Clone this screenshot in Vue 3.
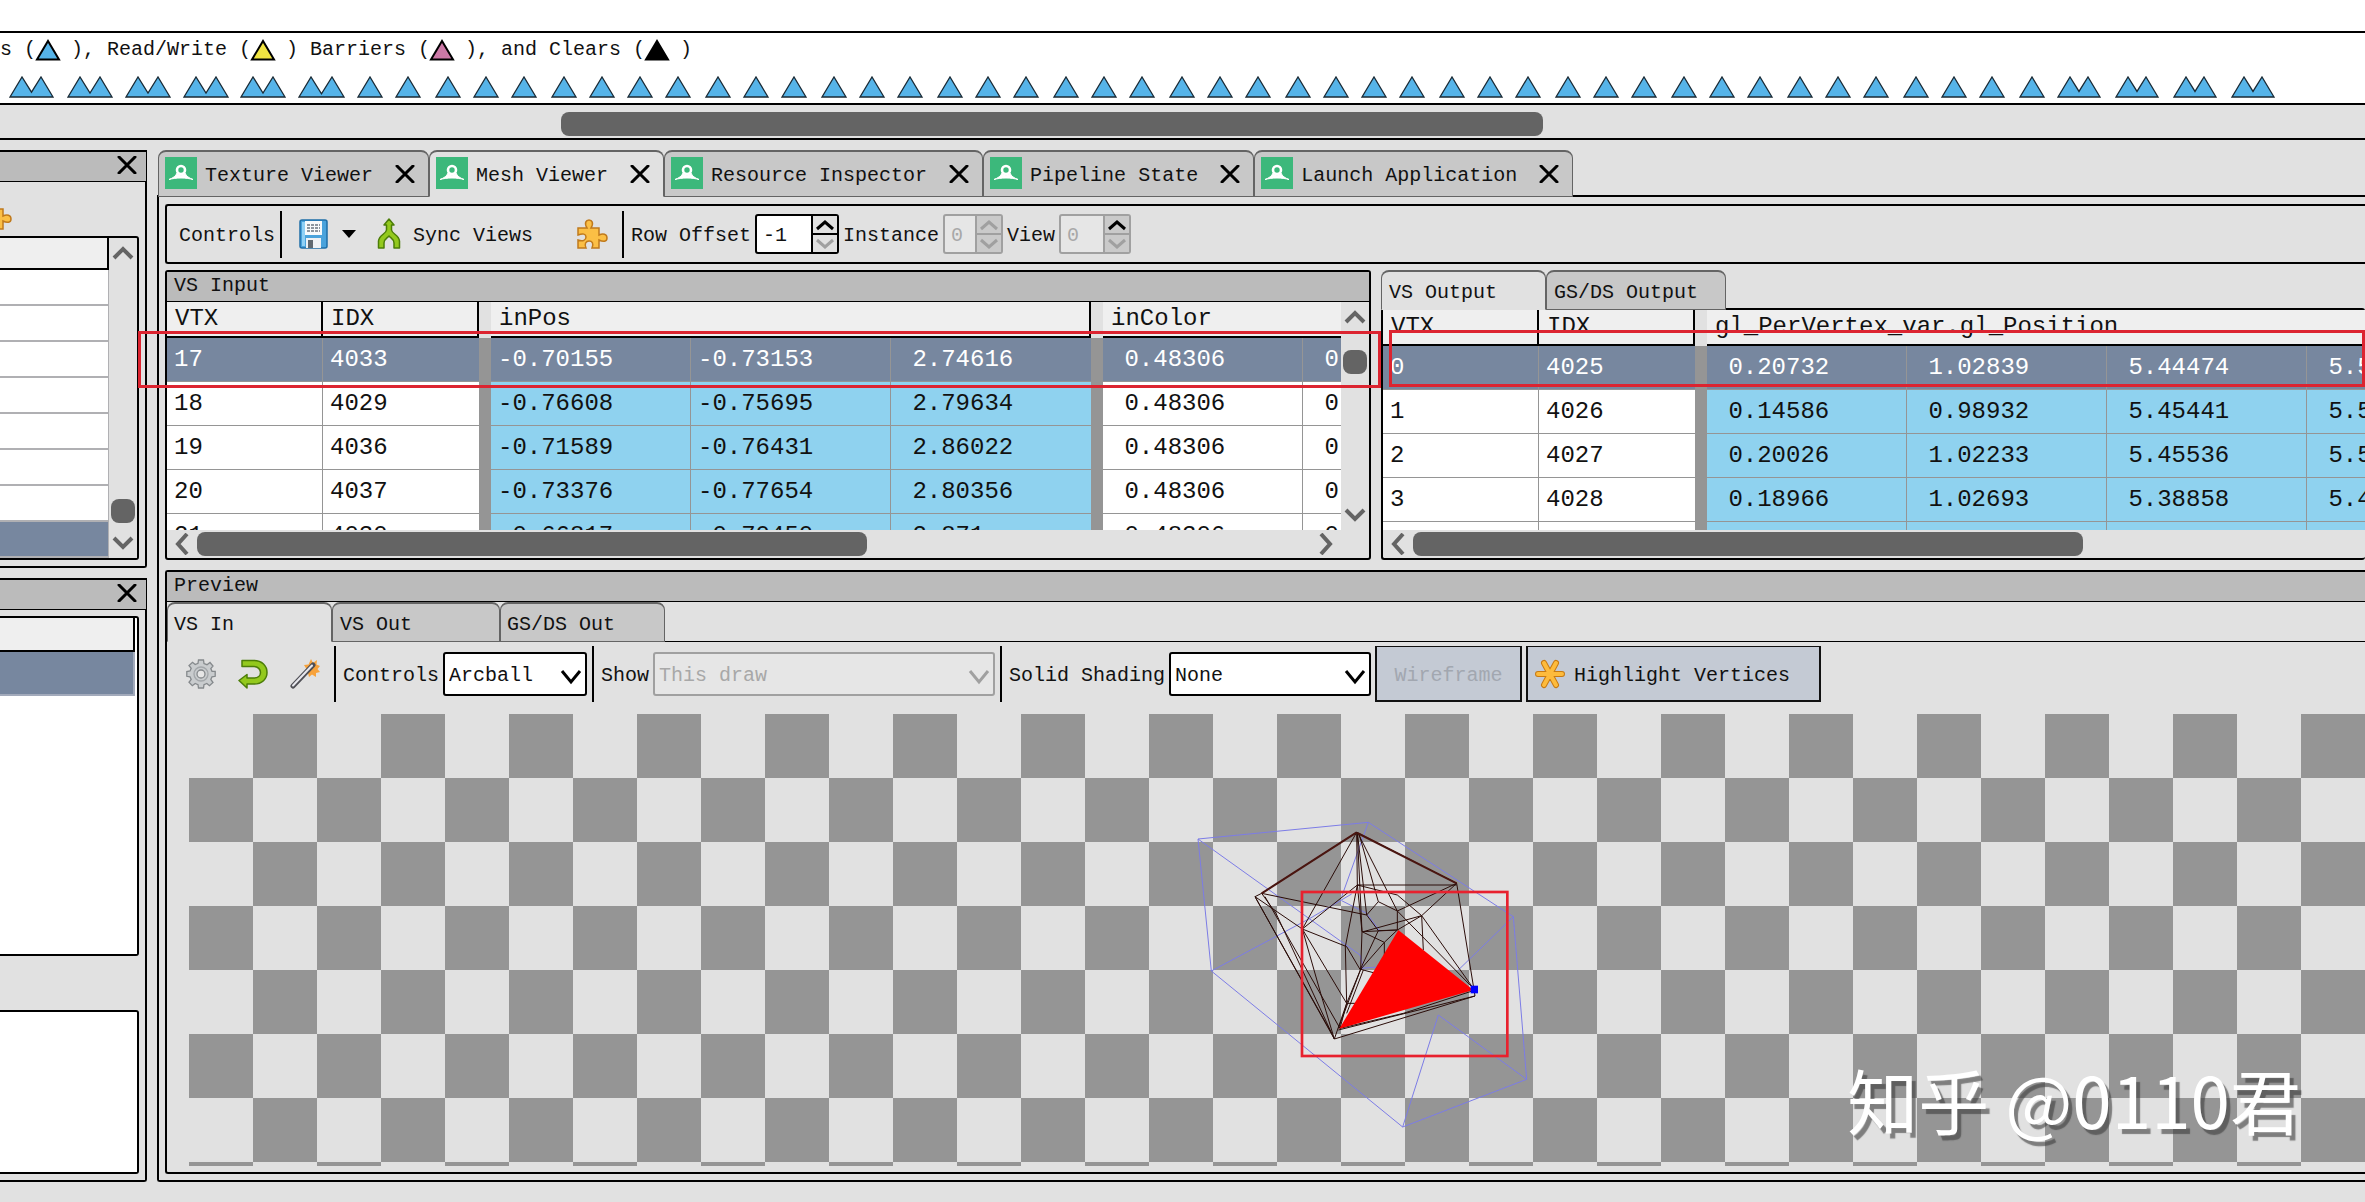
<script setup>
import { ref } from 'vue'

const legend = [
  { before: 's (', color: '#56b4e9' },
  { before: '), Read/Write (', color: '#f0e442' },
  { before: ') Barriers (', color: '#cc79a7' },
  { before: '), and Clears (', color: '#000000' },
]

const pairs = [
  [22, 41], [80, 100], [138, 158], [196, 216], [253, 273], [311, 332],
  [2070, 2088], [2128, 2146], [2186, 2204], [2244, 2262],
]
const singles = [
  370, 408, 448, 486, 524, 564, 602, 640, 678, 718, 756, 794, 834, 872, 910, 950, 988, 1026, 1066, 1104,
  1142, 1182, 1220, 1258, 1298, 1336, 1374, 1412, 1452, 1490, 1528, 1568, 1606, 1644, 1684, 1722, 1760,
  1800, 1838, 1876, 1916, 1954, 1992, 2032,
]
const pairPath = ([a, b]) => {
  const mid = (a + b) / 2
  const valley = 1 + ((b - a) / 2) * 1.6
  return `M${a - 12} 21L${a} 1L${mid} ${valley}L${b} 1L${b + 12} 21Z`
}
const singlePath = (x) => `M${x - 12} 21L${x} 1L${x + 12} 21Z`

const tabs = ['Texture Viewer', 'Mesh Viewer', 'Resource Inspector', 'Pipeline State', 'Launch Application']
const activeTab = ref('Mesh Viewer')

const inputRows = [
  ['17', '4033', '-0.70155', '-0.73153', ' 2.74616', ' 0.48306', ' 0'],
  ['18', '4029', '-0.76608', '-0.75695', ' 2.79634', ' 0.48306', ' 0'],
  ['19', '4036', '-0.71589', '-0.76431', ' 2.86022', ' 0.48306', ' 0'],
  ['20', '4037', '-0.73376', '-0.77654', ' 2.80356', ' 0.48306', ' 0'],
  ['21', '4030', '-0.66817', '-0.70450', ' 2.871', ' 0.48306', ' 0'],
]
const outputRows = [
  ['0', '4025', ' 0.20732', ' 1.02839', ' 5.44474', ' 5.5'],
  ['1', '4026', ' 0.14586', ' 0.98932', ' 5.45441', ' 5.5'],
  ['2', '4027', ' 0.20026', ' 1.02233', ' 5.45536', ' 5.5'],
  ['3', '4028', ' 0.18966', ' 1.02693', ' 5.38858', ' 5.4'],
  ['', '', '', '', '', ''],
]
const rowOffset = ref('-1')
const controls = ref('Arcball')
const shading = ref('None')
</script>

<template>
  <div class="app">
    <header class="timeline">
      <div class="legend">
        <template v-for="item in legend" :key="item.before">
          <span>{{ item.before }}</span>
          <svg class="mark" width="26" height="22" viewBox="0 0 26 22">
            <path d="M2 20.500L13 2L24 20.500Z" :fill="item.color" stroke="#000" stroke-width="2" />
          </svg>
        </template>
        <span>)</span>
      </div>
      <svg class="events" width="2365" height="23">
        <g fill="#56b4e9" stroke="#1a2a35" stroke-width="1.300">
          <path v-for="p in pairs" :key="p[0]" :d="pairPath(p)" />
          <path v-for="x in singles" :key="x" :d="singlePath(x)" />
        </g>
      </svg>
    </header>
    <div class="time-scroll">
      <div class="space-a"></div>
      <div class="thumb"></div>
      <div class="space-b"></div>
    </div>

    <main class="workspace">
      <aside class="docks">
        <section class="dock dock-top">
          <div class="dock-title">
            <button class="close" aria-label="Close"><svg width="20" height="18" viewBox="0 0 20 18"><path d="M2 1L18 17M18 1L2 17" /></svg></button>
          </div>
          <div class="dock-tools">
            <svg width="31" height="31" viewBox="0 0 31 31"><path class="puzzle" d="M1 9H10C7 4 9 1 12 1S17 4 14 9H22V16C26 14 30 15 30 19S26 23 22 21V29H15C17 24 15 22 12 22S7 25 9 29H1V21C6 23 9 21 9 18S6 14 1 16Z" /></svg>
          </div>
          <div class="list-box">
            <div class="list">
              <div class="list-head"></div>
              <div v-for="n in 7" :key="n" class="list-row"></div>
              <div class="list-row selected"></div>
            </div>
            <div class="vbar list-bar">
              <button aria-label="Up"><svg width="22" height="14" viewBox="0 0 22 14"><path d="M2 12L11 3L20 12" /></svg></button>
              <div class="fill"></div>
              <div class="knob"></div>
              <button aria-label="Down"><svg width="22" height="14" viewBox="0 0 22 14"><path d="M2 2L11 11L20 2" /></svg></button>
            </div>
          </div>
        </section>
        <section class="dock dock-bottom">
          <div class="dock-title">
            <button class="close" aria-label="Close"><svg width="20" height="18" viewBox="0 0 20 18"><path d="M2 1L18 17M18 1L2 17" /></svg></button>
          </div>
          <div class="box box-main">
            <div class="box-head"></div>
            <div class="box-row"></div>
          </div>
          <div class="box box-small"></div>
        </section>
      </aside>

      <section class="main">
        <div class="tabs main-tabs" role="tablist">
          <div v-for="t in tabs" :key="t" class="tab" :class="{ active: t === activeTab }">
            <svg width="32" height="32" viewBox="0 0 32 32">
              <rect width="32" height="32" fill="#3cb87b" />
              <circle cx="16" cy="13" r="4" fill="none" stroke="#fff" stroke-width="2.600" />
              <path d="M12 16C11 19 8 21 4 22.500C11 20.500 21 20.500 28 22.500C24 21 21 19 20 16C18 19 14 19 12 16Z" fill="#fff" stroke="#fff" stroke-width="1" />
            </svg>
            <button class="tab-label" role="tab" :aria-selected="t === activeTab" @click="activeTab = t">{{ t }}</button>
            <button class="close" :aria-label="'Close ' + t"><svg width="20" height="18" viewBox="0 0 20 18"><path d="M2 1L18 17M18 1L2 17" /></svg></button>
          </div>
        </div>

        <div class="pane">
          <div class="toolbar">
            <span>Controls</span>
            <i class="sep"></i>
            <button class="icon save" aria-label="Save">
              <svg width="29" height="31" viewBox="0 0 29 31">
                <rect x="1" y="1" width="27" height="28" rx="2" fill="#4aa3dc" stroke="#1f6fa8" stroke-width="1.500" />
                <rect x="3" y="3" width="3" height="24" fill="#8fd0f5" />
                <rect x="6" y="2" width="17" height="14" fill="#f7fafc" />
                <path d="M8 6H21M8 9H21M8 12H21" stroke="#6b7580" stroke-width="1.400" stroke-dasharray="3 1" />
                <rect x="7" y="19" width="15" height="10" fill="#eef1f4" />
                <rect x="9" y="21" width="5" height="8" fill="#5f6870" />
              </svg>
              <svg width="14" height="8" viewBox="0 0 14 8"><path d="M0 0H14L7 8Z" fill="#000" /></svg>
            </button>
            <button class="icon sync">
              <svg width="24" height="32" viewBox="0 0 24 32">
                <path d="M12 1L17 7H14.500V12C15 16 22 17 22.500 23V30H17V25C17 21 13.500 20 12 18C10.500 20 7 21 7 25V30H1.500V23C2 17 9 16 9.500 12V7H7Z" fill="#93c91d" stroke="#4c7d08" stroke-width="1.500" stroke-linejoin="round" />
              </svg>
              <span>Sync Views</span>
            </button>
            <button class="icon plugin" aria-label="Extensions">
              <svg width="31" height="31" viewBox="0 0 31 31"><path class="puzzle" d="M1 9H10C7 4 9 1 12 1S17 4 14 9H22V16C26 14 30 15 30 19S26 23 22 21V29H15C17 24 15 22 12 22S7 25 9 29H1V21C6 23 9 21 9 18S6 14 1 16Z" /></svg>
            </button>
            <i class="sep"></i>
            <label for="row-offset">Row Offset</label>
            <div class="spin wide">
              <input id="row-offset" v-model="rowOffset" />
              <div class="steps">
                <button aria-label="Increase row offset"><svg width="20" height="12" viewBox="0 0 20 12"><path class="on" d="M2 10L10 3L18 10" /></svg></button>
                <button aria-label="Decrease row offset" disabled><svg width="20" height="12" viewBox="0 0 20 12"><path d="M2 2L10 9L18 2" /></svg></button>
              </div>
            </div>
            <label for="instance">Instance</label>
            <div class="spin off">
              <input id="instance" value="0" disabled />
              <div class="steps">
                <button aria-label="Increase instance" disabled><svg width="20" height="12" viewBox="0 0 20 12"><path d="M2 10L10 3L18 10" /></svg></button>
                <button aria-label="Decrease instance" disabled><svg width="20" height="12" viewBox="0 0 20 12"><path d="M2 2L10 9L18 2" /></svg></button>
              </div>
            </div>
            <label for="view">View</label>
            <div class="spin off view">
              <input id="view" value="0" disabled />
              <div class="steps">
                <button aria-label="Increase view" disabled><svg width="20" height="12" viewBox="0 0 20 12"><path class="on" d="M2 10L10 3L18 10" /></svg></button>
                <button aria-label="Decrease view" disabled><svg width="20" height="12" viewBox="0 0 20 12"><path d="M2 2L10 9L18 2" /></svg></button>
              </div>
            </div>
          </div>

          <div class="split">
            <section class="panel vs-input">
              <h2 class="panel-title">VS Input</h2>
              <div class="grid-area">
                <div class="table-clip">
                  <table class="data in">
                    <colgroup>
                      <col class="c-id" /><col class="c-id" /><col class="c-gap" /><col class="c-num" /><col class="c-num" />
                      <col class="c-num" /><col class="c-gap" /><col class="c-num" /><col class="c-last" />
                    </colgroup>
                    <thead>
                      <tr><th>VTX</th><th>IDX</th><td class="gap"></td><th colspan="3">inPos</th><td class="gap"></td><th colspan="2" class="open">inColor</th></tr>
                    </thead>
                    <tbody>
                      <tr v-for="(r, i) in inputRows" :key="r[0]" :class="{ selected: i === 0 }">
                        <td>{{ r[0] }}</td><td class="edge">{{ r[1] }}</td><td class="gap"></td>
                        <td class="pos">{{ r[2] }}</td><td class="pos">{{ r[3] }}</td><td class="pos edge">{{ r[4] }}</td><td class="gap"></td>
                        <td>{{ r[5] }}</td><td class="last">{{ r[6] }}</td>
                      </tr>
                    </tbody>
                  </table>
                </div>
                <div class="vbar">
                  <button aria-label="Up"><svg width="22" height="14" viewBox="0 0 22 14"><path d="M2 12L11 3L20 12" /></svg></button>
                  <div class="knob"></div>
                  <div class="fill"></div>
                  <button aria-label="Down"><svg width="22" height="14" viewBox="0 0 22 14"><path d="M2 2L11 11L20 2" /></svg></button>
                </div>
              </div>
              <div class="hbar">
                <button aria-label="Left"><svg width="14" height="22" viewBox="0 0 14 22"><path d="M12 1L3 11L12 21" /></svg></button>
                <div class="thumb"></div>
                <div class="fill"></div>
                <button aria-label="Right"><svg width="14" height="22" viewBox="0 0 14 22"><path d="M2 1L11 11L2 21" /></svg></button>
              </div>
              <div class="mark-box mark-in"></div>
            </section>

            <section class="vs-output">
              <div class="tabs out-tabs" role="tablist">
                <button class="tab active" role="tab">VS Output</button>
                <button class="tab" role="tab">GS/DS Output</button>
              </div>
              <div class="panel out-panel">
                <div class="table-clip">
                  <table class="data out">
                    <colgroup>
                      <col class="c-id" /><col class="c-id" /><col class="c-gap" /><col class="c-num" /><col class="c-num" />
                      <col class="c-num" /><col class="c-num" />
                    </colgroup>
                    <thead>
                      <tr><th>VTX</th><th>IDX</th><td class="gap"></td><th colspan="4">gl_PerVertex_var.gl_Position</th></tr>
                    </thead>
                    <tbody>
                      <tr v-for="(r, i) in outputRows" :key="r[0]" :class="{ selected: i === 0 }">
                        <td>{{ r[0] }}</td><td class="edge">{{ r[1] }}</td><td class="gap"></td>
                        <td v-for="n in 4" :key="n" class="pos">{{ r[n + 1] }}</td>
                      </tr>
                    </tbody>
                  </table>
                </div>
                <div class="hbar">
                  <button aria-label="Left"><svg width="14" height="22" viewBox="0 0 14 22"><path d="M12 1L3 11L12 21" /></svg></button>
                  <div class="thumb"></div>
                </div>
              </div>
              <div class="mark-box mark-out"></div>
            </section>
          </div>

          <section class="preview">
            <h2 class="panel-title">Preview</h2>
            <div class="tabs view-tabs" role="tablist">
              <button class="tab" :class="'active'" role="tab">VS In</button>
              <button class="tab" role="tab">VS Out</button>
              <button class="tab" role="tab">GS/DS Out</button>
            </div>
            <div class="view-tools">
              <button class="icon" aria-label="Options">
                <svg width="30" height="30" viewBox="0 0 30 30">
                  <path d="M12.500 1H17.500L18 4.500L21 5.700L24 3.500L27 7L24.800 9.500L26 12.300H29.200V17.300L26 17.800L24.800 20.500L27 23.500L23.500 26.700L20.800 24.500L18 25.700L17.500 29H12.500L12 25.700L9.200 24.500L6.300 26.700L3 23.300L5.200 20.500L4 17.800L0.800 17.300V12.500L4 12L5.200 9.300L3 6.500L6.500 3.300L9.200 5.500L12 4.300Z" fill="#c9ccce" stroke="#85898c" stroke-width="1.300" />
                  <circle cx="15" cy="15" r="7" fill="none" stroke="#a3a7aa" stroke-width="1.300" />
                  <circle cx="15" cy="15" r="4" fill="#e6e6e6" stroke="#85898c" stroke-width="1.300" />
                </svg>
              </button>
              <button class="icon" aria-label="Reset view">
                <svg width="30" height="30" viewBox="0 0 30 30">
                  <path d="M4 1.500H16C24 1.500 29 7 29 13.500S24 25 16 25H9V29L1 21.500L9 15.500V19H16C20 19 22.500 16.500 22.500 13.500S20 7.500 16 7.500H4Z" fill="#93c91d" stroke="#4c7d08" stroke-width="1.500" stroke-linejoin="round" />
                </svg>
              </button>
              <button class="icon" aria-label="Auto fit">
                <svg width="30" height="30" viewBox="0 0 30 30">
                  <path d="M21 0L23 4L27 1L26.500 5.500L30 7L27.500 10L30 13L26 14L26 18L22 15.500L19 18L18 14L14 13.500L16.500 10L14 6L18.500 5.500Z" fill="#f7a23b" />
                  <path d="M3 27L23 6" stroke="#4f4f55" stroke-width="5" stroke-linecap="round" />
                  <path d="M3 26.500L22 6.500" stroke="#e8e8ee" stroke-width="2" stroke-linecap="round" />
                </svg>
              </button>
              <i class="sep"></i>
              <label for="controls">Controls</label>
              <div class="select s-controls">
                <select id="controls" v-model="controls"><option>Arcball</option><option>Flycam</option></select>
                <svg width="22" height="18" viewBox="0 0 22 18"><path d="M2 3L11 14L20 3" /></svg>
              </div>
              <i class="sep"></i>
              <label for="show">Show</label>
              <div class="select s-show off">
                <select id="show" disabled><option>This draw</option></select>
                <svg width="22" height="18" viewBox="0 0 22 18"><path d="M2 3L11 14L20 3" /></svg>
              </div>
              <i class="sep"></i>
              <label for="shading">Solid Shading</label>
              <div class="select s-shading">
                <select id="shading" v-model="shading"><option>None</option><option>Solid Colour</option></select>
                <svg width="22" height="18" viewBox="0 0 22 18"><path d="M2 3L11 14L20 3" /></svg>
              </div>
              <button class="toggle wire" disabled><span>Wireframe</span></button>
              <button class="toggle high">
                <svg width="30" height="30" viewBox="0 0 30 30" stroke-linecap="round">
                  <path d="M15 15L9 4M15 15L21 4M15 15H3M15 15H27M15 15L9 26M15 15L21 26" stroke="#c77a12" stroke-width="6" />
                  <path d="M15 15L9 4M15 15L21 4M15 15H3M15 15H27M15 15L9 26M15 15L21 26" stroke="#fdbb3c" stroke-width="4" />
                </svg>
                <span>Highlight Vertices</span>
              </button>
            </div>
            <div class="canvas">
              <svg class="mesh" width="420" height="380" viewBox="0 0 1260 1140" fill="none">
                <g stroke="#7c7ce6" stroke-width="3">
                  <path d="M144 177L655 127L1090 410L1130 898L758 1041L184 573Z" />
                  <path d="M144 177L630 525L640 562M184 573L480 415L605 342M655 127L575 350M1090 410L925 570M865 705L758 1041M865 705L1130 898M575 362L650 400L690 455M630 565L700 560" />
                </g>
                <g stroke="#2a0c08" stroke-width="3">
                  <path d="M620 157L335 340L315 350L553 777L975 648L920 310Z" />
                  <path d="M620 157L457 447L622 315H920M620 157L622 315M622 157L650 405M624 160L742 393M628 165L685 365M622 160L636 455M335 340L650 405M315 350L457 447L590 500L630 568M457 447L512 640L553 777M457 447L590 670M335 340L378 400L553 777M345 350L570 745M315 350L545 760M622 315L586 500L590 670L553 777M622 315L636 455L632 568M622 315L742 345L815 407L742 450L636 455M650 405L685 452L742 450M650 405L685 365L742 393V450M742 393L920 310L815 407L640 455M815 407L820 510M815 407L970 625M742 393L970 625M636 455L703 487L742 450M703 487L632 568L670 578M685 452L630 570M703 487V530M632 568L590 670H620M632 568L565 745M590 670L570 745L760 700L970 632M565 750L975 648M640 570L590 700" />
                </g>
                <path d="M620 157L335 340M622 159L920 310" stroke="#4a1510" stroke-width="6" />
                <path d="M745 450L970 630L568 746Z" fill="#f00" />
                <rect x="962" y="617" width="22" height="23" fill="#00f" />
                <rect x="456" y="336" width="616" height="492" stroke="#e8212e" stroke-width="8" />
              </svg>
              <div class="watermark">知乎 @0110君</div>
            </div>
          </section>
        </div>
      </section>
    </main>
  </div>
</template>

<style>
body {
  margin: 0;
  background: #e1e1e1;
}
</style>

<style scoped>
.app {
  display: flex;
  flex-direction: column;
  min-height: 100vh;
  overflow: hidden;
  background: #e1e1e1;
  color: #111;
  font: 20px/24px "Liberation Mono", "Noto Sans CJK SC", monospace;
}
.app *,
.app *::before {
  box-sizing: border-box;
}
button,
input,
select {
  margin: 0;
  padding: 0;
  border: 0;
  background: none;
  color: inherit;
  font: inherit;
}
svg {
  display: block;
  flex: none;
}

/* timeline */
.timeline {
  height: 74px;
  margin-top: 31px;
  padding-top: 5px;
  border-top: 2px solid #000;
  border-bottom: 2px solid #000;
  background: #fff;
  box-shadow: 0 -31px 0 #fff;
}
.legend {
  display: flex;
  align-items: center;
  height: 24px;
  white-space: pre;
}
.mark {
  margin: 0 10px 0 -1px;
}
.events {
  margin-top: 14px;
}
.time-scroll {
  display: flex;
  height: 35px;
  padding: 7px 0 3px;
  border-bottom: 2px solid #000;
}
.time-scroll .space-a {
  flex: 561;
}
.time-scroll .thumb {
  flex: 982;
}
.time-scroll .space-b {
  flex: 822;
}
.thumb {
  height: 24px;
  border-radius: 8px;
  background: #646464;
}

/* workspace */
.workspace {
  flex: 1;
  display: flex;
  gap: 10px;
  padding: 10px 0 20px;
}
.docks {
  flex: none;
  display: flex;
  flex-direction: column;
  gap: 10px;
  width: 147px;
}
.dock {
  display: flex;
  flex-direction: column;
  border: solid #000;
  border-width: 0 2px 2px 0;
  border-radius: 0 0 3px 0;
  padding: 0 6px 6px 0;
}
.dock-top {
  height: 418px;
}
.dock-bottom {
  flex: 1;
}
.dock-title {
  display: flex;
  justify-content: flex-end;
  align-items: center;
  height: 32px;
  margin-right: -8px;
  padding: 0 9px 4px 0;
  border: solid #000;
  border-width: 2px 1px 1px 0;
  background: #bbb;
}
.close path {
  stroke: #000;
  stroke-width: 3;
  stroke-linecap: round;
  fill: none;
}
.dock-tools {
  display: flex;
  align-items: center;
  height: 54px;
  margin-right: 127px;
  padding-top: 12px;
  justify-content: flex-end;
}
.puzzle {
  fill: #fbbf45;
  stroke: #c07a1c;
  stroke-width: 1.500;
}
.list-box {
  flex: 1;
  display: flex;
  border: 2px solid #000;
  border-left: 0;
  border-radius: 0 3px 3px 0;
}
.list {
  flex: 1;
  background: #fff;
}
.list-head {
  height: 32px;
  border: solid #000;
  border-width: 0 2px 2px 0;
  background: #efefef;
}
.list-row {
  height: 36px;
  border: solid #b0b0b3;
  border-width: 0 1px 2px 0;
}
.list-row.selected {
  background: #77879f;
}
.vbar {
  flex: none;
  display: flex;
  flex-direction: column;
  align-items: center;
  width: 28px;
  padding: 8px 0;
}
.fill {
  flex: 1;
}
.knob {
  width: 24px;
  height: 24px;
  border-radius: 8px;
  background: #646464;
}
.vbar path,
.hbar path {
  fill: none;
  stroke: #646464;
  stroke-width: 4;
}
.box {
  border: 2px solid #000;
  border-left: 0;
  border-radius: 0 3px 3px 0;
  background: #fff;
}
.box-main {
  flex: 1;
  margin: 6px 0 54px;
  padding-right: 2px;
}
.box-head {
  height: 34px;
  border: solid #000;
  border-width: 0 2px 2px 0;
  background: #efefef;
}
.box-row {
  height: 44px;
  border: solid #a2aabb;
  border-width: 0 2px 2px 0;
  background: #77879f;
}
.box-small {
  height: 164px;
}

/* tabs */
.tabs {
  display: flex;
  position: relative;
  z-index: 1;
}
.tab {
  display: flex;
  align-items: center;
  border: 1px solid #646464;
  border-top-width: 2px;
  border-radius: 8px 8px 0 0;
  background: #c8c8c8;
}
.tab.active {
  border-bottom-color: #e1e1e1;
  background: #e1e1e1;
}
.main {
  flex: 1;
  min-width: 0;
  display: flex;
  flex-direction: column;
}
.main-tabs {
  margin-bottom: -2px;
  height: 47px;
  padding-left: 1px;
}
.main-tabs .tab {
  padding: 0 13px 4px 6px;
}
.main-tabs .tab > svg {
  margin-top: 2px;
}
.tab-label {
  margin: 8px 22px 0 8px;
}
.main-tabs .close {
  margin-top: 4px;
}
.pane {
  flex: 1;
  display: flex;
  flex-direction: column;
  border: solid #000;
  border-width: 2px 0 2px 2px;
  border-radius: 0 0 0 3px;
  padding: 7px 0 6px 6px;
}

/* upper toolbar */
.toolbar {
  display: flex;
  align-items: center;
  height: 60px;
  padding-left: 12px;
  border: 2px solid #000;
  border-right: 0;
  border-radius: 3px 0 0 3px;
}
.toolbar span,
.toolbar label,
.toolbar input,
.view-tools span,
.view-tools label,
.view-tools select {
  padding-top: 4px;
}
.sep {
  flex: none;
  width: 2px;
  height: 47px;
  margin: 0 7px 0 5px;
  background: #000;
}
.icon {
  display: flex;
  align-items: center;
  flex: none;
}
.save {
  gap: 14px;
  margin-left: 10px;
}
.sync {
  gap: 12px;
  margin-left: 21px;
}
.plugin {
  margin: 0 9px 0 44px;
}
.spin {
  display: flex;
  flex: none;
  width: 60px;
  height: 40px;
  margin: 0 4px;
  border: 2px solid #000;
  border-radius: 3px;
  background: #fff;
}
.spin.wide {
  width: 84px;
}
.spin.view {
  width: 72px;
}
.spin input {
  flex: 1;
  width: 0;
  min-width: 0;
  padding-left: 6px;
}
.spin.off {
  border-color: #a0a0a0;
  background: #e6e6e6;
  color: #a8a8a8;
}
.steps {
  display: flex;
  flex-direction: column;
  width: 26px;
  border-left: 2px solid #000;
  background: #e1e1e1;
}
.off .steps {
  border-color: #a0a0a0;
  background: #cacaca;
}
.steps button {
  flex: 1;
  display: flex;
  align-items: center;
  justify-content: center;
}
.steps button + button {
  border-top: 2px solid #000;
}
.off .steps button + button {
  border-color: #a0a0a0;
}
.steps path {
  fill: none;
  stroke: #a0a0a0;
  stroke-width: 3;
}
.steps path.on {
  stroke: #000;
}

/* tables */
.split {
  display: flex;
  gap: 10px;
  height: 290px;
  margin: 6px 0 10px;
}
.panel {
  display: flex;
  flex-direction: column;
  border: 2px solid #000;
  border-radius: 3px;
}
.vs-input {
  position: relative;
  flex: 1202 1 0;
  min-width: 0;
}
.panel-title {
  margin: 0;
  padding: 0 7px;
  height: 30px;
  border-bottom: 1px solid #000;
  background: #bbb;
  font-weight: 400;
  font-size: 20px;
  line-height: 28px;
}
.grid-area {
  flex: 1;
  min-height: 0;
  display: flex;
}
.table-clip {
  flex: 1;
  min-width: 0;
  min-height: 0;
  overflow: hidden;
}
.data {
  table-layout: fixed;
  border-collapse: separate;
  border-spacing: 0;
  width: 100%;
  font-size: 24px;
  line-height: 28px;
}
.data.out {
  width: 1124px;
}
.c-id {
  width: 156px;
}
.c-gap {
  width: 12px;
}
.c-num {
  width: 200px;
}
.data th {
  height: 36px;
  padding: 0 8px;
  border: solid #000;
  border-width: 0 2px 2px 0;
  background: #efefef;
  font-weight: 400;
  text-align: left;
}
.data th.open {
  border-right: 0;
}
.data td {
  height: 44px;
  padding: 0 7px;
  border: solid #959595;
  border-width: 0 1px 1px 0;
  background: #fff;
  white-space: pre;
}
.data td.pos {
  background: #8fd2ef;
}
.data td.edge {
  border-right-width: 0;
}
.data td.last {
  padding-right: 0;
  border-right: 0;
}
.data .selected td,
.data .selected td.pos {
  background: #77879f;
  color: #fff;
}
.data td.gap,
.data .selected td.gap {
  padding: 0;
  border: 0;
  background: #959595;
}
.data thead td.gap {
  height: 36px;
  background: #e1e1e1;
}
.hbar {
  flex: none;
  display: flex;
  align-items: center;
  height: 28px;
  padding: 0 8px;
}
.hbar .thumb {
  width: 670px;
  margin-left: 8px;
}
.vs-input .hbar {
  padding-right: 36px;
}
.grid-area .knob {
  margin-top: 26px;
}
.list-bar .knob {
  margin-bottom: 13px;
}
.vs-output {
  position: relative;
  flex: 984 1 0;
  min-width: 0;
  display: flex;
  flex-direction: column;
}
.out-tabs {
  height: 40px;
  margin-bottom: -2px;
}
.out-tabs .tab {
  padding: 4px 27px 0 7px;
}
.out-tabs .tab.active {
  padding-right: 48px;
}
.out-panel {
  flex: 1;
  min-height: 0;
  border-right: 0;
}
.mark-box {
  position: absolute;
  z-index: 2;
  border: 3px solid #dc2430;
  height: 57px;
}
.mark-in {
  top: 59px;
  left: -29px;
  right: -12px;
}
.mark-out {
  top: 60px;
  left: 8px;
  right: 0;
}

/* preview */
.preview {
  flex: 1;
  display: flex;
  flex-direction: column;
  border: solid #000;
  border-width: 2px 0 2px 2px;
  border-radius: 3px 0 0 3px;
}
.view-tabs {
  height: 40px;
}
.view-tabs::before {
  content: "";
  position: absolute;
  z-index: -1;
  left: 497px;
  right: 0;
  bottom: 0;
  border-bottom: 1px solid #000;
}
.view-tabs .tab {
  width: 165px;
  padding: 4px 0 0 6px;
}
.view-tabs .tab:nth-child(2) {
  width: 168px;
  padding-left: 7px;
}
.view-tools {
  display: flex;
  align-items: center;
  height: 56px;
  margin: 4px 0 12px;
  padding-left: 19px;
}
.view-tools .icon {
  margin-right: 22px;
}
.view-tools .icon + .sep {
  margin-left: -8px;
}
.view-tools .sep {
  height: 56px;
}
.select {
  position: relative;
  flex: none;
  height: 44px;
  margin-left: 4px;
  border: 2px solid #000;
  border-radius: 3px;
  background: #fff;
}
.select select {
  appearance: none;
  width: 100%;
  height: 100%;
  padding-left: 4px;
  opacity: 1;
}
.select svg {
  position: absolute;
  right: 3px;
  top: 14px;
  pointer-events: none;
}
.select path {
  fill: none;
  stroke: #000;
  stroke-width: 3;
}
.select.off {
  border-color: #a0a0a0;
  background: #e6e6e6;
  color: #a8a8a8;
}
.select.off path {
  stroke: #a0a0a0;
}
.s-controls {
  width: 144px;
}
.s-show {
  width: 342px;
}
.s-shading {
  width: 202px;
}
.toggle {
  display: flex;
  flex: none;
  align-items: center;
  justify-content: center;
  gap: 9px;
  height: 56px;
  margin-left: 4px;
  border: 2px solid #111;
  border-top-width: 1px;
  background: #c4cad4;
}
.toggle.wire {
  width: 147px;
  color: #a2a7b0;
}
.toggle.high {
  width: 295px;
  padding-right: 22px;
}
.canvas {
  position: relative;
  flex: 1;
  min-height: 452px;
  margin: 0 0 6px 22px;
  background: repeating-conic-gradient(#959595 0 25%, #e1e1e1 0 50%) 0 0 / 128px 128px;
}
.mesh {
  position: absolute;
  left: 961px;
  top: 66px;
}
.watermark {
  position: absolute;
  right: 64px;
  bottom: 18px;
  color: #fff;
  font: 400 71px/100px "Noto Sans CJK SC", sans-serif;
  text-shadow: 4px 5px 1px rgba(60, 60, 60, 0.6);
  white-space: pre;
}
</style>
